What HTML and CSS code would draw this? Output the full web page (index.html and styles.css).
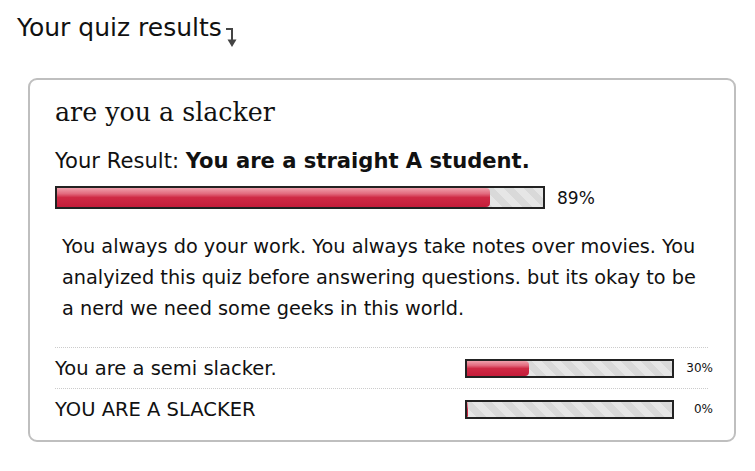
FILE: index.html
```html
<!DOCTYPE html>
<html>
<head>
<meta charset="utf-8">
<link rel="stylesheet" href="styles.css">
</head>
<body>
<div class="page">
  <h1 class="heading">Your quiz results<svg class="hook" width="14" height="21" viewBox="0 0 14 21"><path d="M1 2 H7 V14" fill="none" stroke="#444" stroke-width="2"/><path d="M2.5 12.5 H11.5 L7 20 Z" fill="#444"/></svg></h1>
  <div class="card">
    <h2 class="title">are you a slacker</h2>
    <div class="result">Your Result: <b>You are a straight A student.</b></div>
    <div class="main-row">
      <div class="bar big"><div class="fill" style="width:89%"></div></div>
      <span class="pct">89%</span>
    </div>
    <p class="desc">You always do your work. You always take notes over movies. You analyized this quiz before answering questions. but its okay to be a nerd we need some geeks in this world.</p>
    <div class="others">
      <div class="other">
        <span class="name">You are a semi slacker.</span>
        <div class="bar small"><div class="fill" style="width:30%"></div></div>
        <span class="spct">30%</span>
      </div>
      <div class="other">
        <span class="name">YOU ARE A SLACKER</span>
        <div class="bar small"><div class="fill" style="width:0.6%"></div></div>
        <span class="spct">0%</span>
      </div>
    </div>
  </div>
</div>
</body>
</html>
```
FILE: styles.css
```css
html, body {
  margin: 0;
  padding: 0;
  background: #fff;
}
body {
  font-family: "DejaVu Sans", Verdana, sans-serif;
  color: #111;
}
.page {
  padding: 13px 0 0 17px;
}
.heading {
  margin: 0;
  font-weight: normal;
  font-size: 25px;
  line-height: 30px;
  height: 30px;
  color: #111;
  display: flex;
  align-items: flex-start;
}
.hook {
  margin: 14px 0 0 3px;
}
.card {
  margin: 35px 0 0 11px;
  width: 708px;
  height: 364px;
  border: 2px solid #bfbfbf;
  border-radius: 9px;
  box-sizing: border-box;
  padding: 18px 25px 0 25px;
}
.title {
  margin: 0;
  font-family: "DejaVu Serif", Georgia, serif;
  font-weight: normal;
  font-size: 25.3px;
  line-height: 30px;
  color: #111;
}
.result {
  margin-top: 21px;
  font-size: 21.1px;
  line-height: 24px;
}
.result b {
  font-weight: bold;
}
.main-row {
  display: flex;
  align-items: center;
  margin-top: 13px;
}
.bar {
  border: 2px solid #222;
  box-sizing: border-box;
  background: repeating-linear-gradient(45deg, #e6e6e6 0 7px, #d9d9d9 7px 14px);
  overflow: hidden;
}
.bar.big {
  width: 490px;
  height: 23px;
}
.bar.small {
  width: 209px;
  height: 19px;
  margin-left: auto;
}
.fill {
  height: 100%;
  border-radius: 0 4px 4px 0;
  background: linear-gradient(to bottom, #f0a0ac 0%, #e26a7e 30%, #cf2a45 50%, #c41d3a 100%);
}
.pct {
  margin-left: 12px;
  font-size: 17px;
  line-height: 20px;
}
.desc {
  margin: 22px 0 0 7px;
  font-size: 19.3px;
  line-height: 31px;
}
.others {
  margin-top: 23px;
  width: 653px;
}
.other {
  display: flex;
  align-items: center;
  height: 41px;
  box-sizing: border-box;
  border-top: 1px dotted #ccc;
}
.name {
  font-size: 19.5px;
}
.spct {
  width: 39px;
  margin-right: -5px;
  text-align: right;
  font-size: 12px;
}
```
